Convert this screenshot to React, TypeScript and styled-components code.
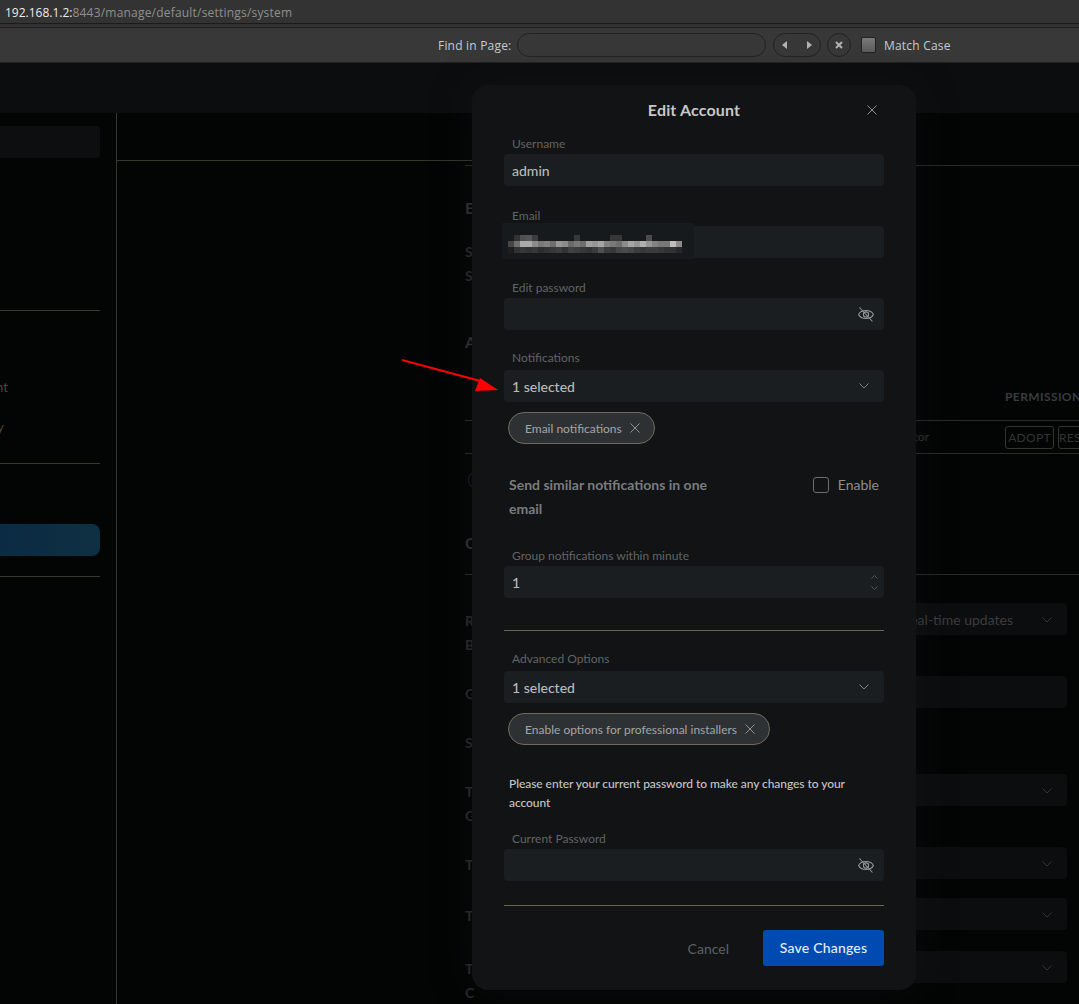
import styled, { createGlobalStyle } from 'styled-components';

const GlobalStyle = createGlobalStyle`
  html, body {
    margin: 0;
    height: 100%;
    background: #030404;
    overflow: hidden;
  }
  * {
    box-sizing: border-box;
  }
`;

const Page = styled.div`
  position: relative;
  width: 1079px;
  height: 1004px;
  overflow: hidden;
  background: #030404;
  font-family: 'Lato', sans-serif;
`;

/* browser chrome */
const UrlBar = styled.div`
  height: 24px;
  padding-left: 5px;
  background: #333333;
  border-bottom: 1px solid #1b1b1b;
  font: 12px/25px 'Open Sans', sans-serif;
  letter-spacing: 0.2px;
  color: #8f8f8f;
  white-space: nowrap;
`;

const UrlHost = styled.span`
  color: #ececec;
  letter-spacing: 0;
`;

const FindBar = styled.div`
  height: 39px;
  padding-top: 3px;
  background: #333333;
`;

const FindRow = styled.div`
  height: 36px;
  display: flex;
  align-items: center;
  padding-left: 438px;
  background: #383838;
  border-top: 1px solid #1f1f1f;
  border-bottom: 1px solid #222222;
  font: 12px 'Open Sans', sans-serif;
  letter-spacing: 0.2px;
  color: #c3ccd2;
`;

const FindLabel = styled.span`
  width: 79px;
`;

const FindInput = styled.div`
  width: 249px;
  height: 24px;
  border: 1px solid #222222;
  border-radius: 12px;
`;

const FindPill = styled.div`
  width: 48px;
  height: 24px;
  margin-left: 7px;
  padding: 0 8px;
  display: flex;
  align-items: center;
  justify-content: space-between;
  border: 1px solid #222222;
  border-radius: 12px;
`;

const FindClose = styled.div`
  width: 24px;
  height: 24px;
  margin-left: 6px;
  display: flex;
  align-items: center;
  justify-content: center;
  border: 1px solid #222222;
  border-radius: 50%;
`;

const FindCheck = styled.div`
  width: 15px;
  height: 16px;
  margin: 0 8px 0 10px;
  border: 1px solid #222222;
  border-radius: 2px;
  background: linear-gradient(#7a7a7a, #5c5c5c);
`;

/* page behind the dialog */
const TopStrip = styled.div`
  height: 50px;
  background: #0c0d0e;
`;

const Body = styled.div`
  display: flex;
  height: 891px;
`;

const Sidebar = styled.aside`
  width: 117px;
  padding: 13px 16px 0 0;
  border-right: 1px solid #38362f;
  flex-shrink: 0;
`;

const SideBox = styled.div`
  height: 32px;
  border-radius: 0 3px 3px 0;
  background: #0d0e0f;
`;

const SideRule = styled.div<{ $top: number }>`
  height: 1px;
  margin-top: ${(p) => p.$top}px;
  background: #3a3833;
`;

const SideText = styled.div<{ $top: number; $cut: number }>`
  margin-top: ${(p) => p.$top}px;
  overflow: hidden;
  text-indent: -${(p) => p.$cut}px;
  font-size: 13px;
  line-height: 24px;
  color: #4d4842;
`;

const SideActive = styled.div`
  height: 32px;
  margin-top: 60px;
  border-radius: 0 8px 8px 0;
  background: linear-gradient(90deg, #0b2a44, #0f3042);
`;

const Main = styled.main`
  flex: 1;
  min-width: 0;
  overflow: hidden;
`;

const MainHead = styled.div`
  width: 400px;
  height: 48px;
  border-bottom: 1px solid #38352e;
`;

const Panel = styled.section`
  margin: 4px 0 0 348px;
  padding-right: 12px;
  border-top: 1px solid #2b2925;
  font-size: 14px;
  line-height: 24px;
  font-weight: 700;
  color: #2a2b2c;
  overflow: hidden;
`;

const Cap = styled.div<{ $top: number }>`
  margin-top: ${(p) => p.$top}px;
`;

const Heading = styled(Cap)`
  font-size: 16px;
  color: #303234;
`;

const TableHead = styled.div`
  margin: 31px -12px 0 0;
  padding: 0 0 11px 540px;
  border-bottom: 1px solid #2d2b27;
  font-size: 12px;
  letter-spacing: 0.4px;
  color: #3b3c3d;
  white-space: nowrap;
`;

const TableRow = styled.div`
  height: 33px;
  margin-right: -12px;
  display: flex;
  align-items: center;
  gap: 4px;
  border-bottom: 1px solid #2d2b27;
  font-size: 12px;
  font-weight: 400;
  color: #333435;
`;

const RoleCell = styled.div`
  width: 464px;
  flex-shrink: 0;
  margin-right: 72px;
  text-align: right;
`;

const RowButton = styled.div`
  width: 49px;
  height: 23px;
  flex-shrink: 0;
  border: 1px solid #34332f;
  border-radius: 3px;
  line-height: 21px;
  text-align: center;
  letter-spacing: 0.3px;
  white-space: nowrap;
`;

const Radio = styled.div`
  width: 18px;
  height: 18px;
  margin: 17px 0 0 3px;
  border: 1px solid #0f2a3e;
  border-radius: 50%;
`;

const SectionHead = styled(Heading)`
  margin-right: -12px;
  padding-bottom: 19px;
  border-bottom: 1px solid #2b2925;
`;

const SettingRow = styled.div<{ $top: number; $height: number }>`
  height: ${(p) => p.$height}px;
  margin-top: ${(p) => p.$top}px;
  display: flex;
  justify-content: space-between;
`;

const SettingLabel = styled.div`
  padding-top: 6px;
`;

const GhostSelect = styled.div`
  width: 380px;
  height: 32px;
  padding: 1px 15px 0 0;
  display: flex;
  align-items: center;
  justify-content: flex-end;
  gap: 29px;
  border-radius: 4px;
  background: #0c0d0e;
  font-weight: 400;
  color: #3c3d3e;
`;

/* edit account dialog */
const Dialog = styled.div`
  position: absolute;
  top: 85px;
  left: 472px;
  width: 444px;
  height: 905px;
  padding: 0 32px;
  border-radius: 16px;
  background: #111314;
  box-shadow: 0 0 40px rgba(24, 26, 28, 0.35);
`;

const DialogHead = styled.header`
  position: relative;
  height: 49px;
  display: flex;
  align-items: center;
  justify-content: center;
  font-size: 16px;
  font-weight: 700;
  letter-spacing: 0.15px;
  color: #c6c7c6;
`;

const CloseIcon = styled.div`
  position: absolute;
  right: 7px;
  top: 20px;
  display: flex;
`;

const Label = styled.div<{ $top: number; $gap?: number }>`
  margin-top: ${(p) => p.$top}px;
  padding: 1px 0 ${(p) => p.$gap ?? 1}px 8px;
  font-size: 12px;
  line-height: 18px;
  color: #626465;
`;

const Field = styled.div`
  position: relative;
  height: 32px;
  padding: 0 15px 0 8px;
  display: flex;
  align-items: center;
  justify-content: space-between;
  border-radius: 4px;
  background: #1a1e20;
  font-size: 14px;
  font-weight: 500;
  color: #b9baba;
`;

const Mosaic = styled.svg`
  position: absolute;
  left: -2px;
  top: -3px;
`;

const EyeIcon = styled.svg`
  margin-right: -5px;
`;

const Chip = styled.div`
  height: 32px;
  width: fit-content;
  margin: 10px 0 0 4px;
  padding: 0 14px 0 16px;
  display: flex;
  align-items: center;
  gap: 8px;
  border: 1px solid #6f6a5d;
  border-radius: 16px;
  background: #2e3134;
  font-size: 12px;
  color: #a4a5a6;
`;

const ToggleRow = styled.div`
  margin-top: 29px;
  padding: 0 5px;
  display: flex;
  justify-content: space-between;
  font-size: 14px;
  line-height: 24px;
`;

const ToggleText = styled.div`
  width: 220px;
  font-weight: 700;
  color: #7b7c7c;
`;

const Enable = styled.label`
  display: flex;
  align-items: center;
  height: 24px;
  gap: 9px;
  color: #8d8e8e;
`;

const Box = styled.span`
  width: 16px;
  height: 16px;
  border: 1px solid #6d6e6e;
  border-radius: 3px;
`;

const Spin = styled.div`
  display: flex;
  flex-direction: column;
  gap: 7px;
  margin-right: -9px;
`;

const Rule = styled.div<{ $top: number }>`
  height: 1px;
  margin-top: ${(p) => p.$top}px;
  background: #6c6352;
`;

const Notice = styled.p`
  margin: 29px 0 0;
  padding-left: 5px;
  font-size: 12px;
  line-height: 19px;
  font-weight: 500;
  letter-spacing: -0.06px;
  color: #c4c5c5;
`;

const Footer = styled.footer`
  margin-top: 24px;
  display: flex;
  align-items: center;
  justify-content: flex-end;
  gap: 34px;
  font-size: 14px;
`;

const Cancel = styled.span`
  color: #5e6061;
`;

const Save = styled.div`
  width: 121px;
  height: 36px;
  border-radius: 3px;
  background: #004bb2;
  line-height: 36px;
  text-align: center;
  font-weight: 500;
  letter-spacing: 0.2px;
  color: #e6edf6;
`;

const Arrow = styled.svg`
  position: absolute;
  left: 400px;
  top: 355px;
  pointer-events: none;
`;

const row1 = [0, 50, 80, 85, 60, 0, 0, 0, 0, 0, 0, 55, 0, 0, 0, 0, 0, 55, 55, 0, 0, 0, 0, 75, 0, 0, 0, 0, 0];
const row2 = [70, 110, 170, 170, 140, 120, 130, 110, 150, 140, 105, 120, 110, 160, 150, 165, 130, 120, 110, 140, 165, 150, 175, 150, 130, 120, 120, 190, 140];
const row3 = [30, 50, 55, 50, 55, 45, 50, 55, 60, 50, 65, 60, 55, 50, 60, 80, 60, 55, 70, 75, 70, 60, 55, 60, 60, 55, 50, 50, 40];

function BlurredEmail() {
  return (
    <Mosaic width="192" height="36" viewBox="0 0 192 36">
      <rect x="0" y="0" width="192" height="36" fill="#171a1c" />
      {[row1, row2, row3].map((cells, r) =>
        cells.map((v, c) =>
          v ? (
            <rect key={`${r}-${c}`} x={6 + c * 6} y={12 + r * 6} width="6" height="6" fill={`rgb(${v},${v},${v})`} />
          ) : null,
        ),
      )}
    </Mosaic>
  );
}

function Cross({ size = 10, color = '#8e9091' }: { size?: number; color?: string }) {
  return (
    <svg width={size} height={size} viewBox="0 0 10 10" fill="none" stroke={color} strokeWidth="1">
      <path d="M0.5 0.5L9.5 9.5M9.5 0.5L0.5 9.5" />
    </svg>
  );
}

function Chevron({ color = '#7e8081' }: { color?: string }) {
  return (
    <svg width="10" height="6" viewBox="0 0 10 6" fill="none" stroke={color} strokeWidth="1">
      <path d="M0.5 0.5L5 5L9.5 0.5" />
    </svg>
  );
}

function EyeOff() {
  return (
    <EyeIcon width="16" height="15" viewBox="0 0 16 15" fill="none" stroke="#939596" strokeWidth="1.1">
      <path d="M0.6 7.5C3 2.2 13 2.2 15.4 7.5C13 12.8 3 12.8 0.6 7.5Z" />
      <circle cx="8" cy="7.5" r="2.6" />
      <path d="M1.5 0.5L14.5 14.5" />
    </EyeIcon>
  );
}

export default function App() {
  return (
    <Page>
      <GlobalStyle />
      <UrlBar>
        <UrlHost>192.168.1.2:</UrlHost>8443/manage/default/settings/system
      </UrlBar>
      <FindBar>
        <FindRow>
          <FindLabel>Find in Page:</FindLabel>
          <FindInput />
          <FindPill>
            <svg width="5" height="8" viewBox="0 0 5 8">
              <path d="M5 0V8L0 4Z" fill="#b4b4b4" />
            </svg>
            <svg width="5" height="8" viewBox="0 0 5 8">
              <path d="M0 0V8L5 4Z" fill="#b4b4b4" />
            </svg>
          </FindPill>
          <FindClose>
            <svg width="8" height="8" viewBox="0 0 8 8" fill="none" stroke="#b4b4b4" strokeWidth="2">
              <path d="M1 1L7 7M7 1L1 7" />
            </svg>
          </FindClose>
          <FindCheck />
          Match Case
        </FindRow>
      </FindBar>
      <TopStrip />

      <Body>
        <Sidebar>
          <SideBox />
          <SideRule $top={152} />
          <SideText $top={64} $cut={4}>
            nt
          </SideText>
          <SideText $top={16} $cut={3}>
            y
          </SideText>
          <SideRule $top={24} />
          <SideActive />
          <SideRule $top={20} />
        </Sidebar>
        <Main>
          <MainHead />
          <Panel>
            <Heading $top={30}>E</Heading>
            <Cap $top={20}>S</Cap>
            <Cap $top={0}>S</Cap>
            <Heading $top={42}>A</Heading>
            <TableHead>PERMISSIONS</TableHead>
            <TableRow>
              <RoleCell>Administrator</RoleCell>
              <RowButton>ADOPT</RowButton>
              <RowButton>RESTART</RowButton>
            </TableRow>
            <Radio />
            <SectionHead $top={42}>C</SectionHead>
            <SettingRow $top={28} $height={53}>
              <SettingLabel>
                R
                <br />B
              </SettingLabel>
              <GhostSelect>
                Real-time updates
                <Chevron color="#333435" />
              </GhostSelect>
            </SettingRow>
            <SettingRow $top={20} $height={33}>
              <SettingLabel>G</SettingLabel>
              <GhostSelect />
            </SettingRow>
            <SettingRow $top={16} $height={29}>
              <SettingLabel>S</SettingLabel>
            </SettingRow>
            <SettingRow $top={20} $height={53}>
              <SettingLabel>
                T
                <br />G
              </SettingLabel>
              <GhostSelect>
                <Chevron color="#333435" />
              </GhostSelect>
            </SettingRow>
            <SettingRow $top={20} $height={32}>
              <SettingLabel>T</SettingLabel>
              <GhostSelect>
                <Chevron color="#333435" />
              </GhostSelect>
            </SettingRow>
            <SettingRow $top={19} $height={33}>
              <SettingLabel>T</SettingLabel>
              <GhostSelect>
                <Chevron color="#333435" />
              </GhostSelect>
            </SettingRow>
            <SettingRow $top={20} $height={53}>
              <SettingLabel>
                T
                <br />C
              </SettingLabel>
              <GhostSelect>
                <Chevron color="#333435" />
              </GhostSelect>
            </SettingRow>
          </Panel>
        </Main>
      </Body>

      <Dialog>
        <DialogHead>
          Edit Account
          <CloseIcon>
            <Cross />
          </CloseIcon>
        </DialogHead>
        <Label $top={0}>Username</Label>
        <Field>admin</Field>
        <Label $top={20}>Email</Label>
        <Field>
          <BlurredEmail />
        </Field>
        <Label $top={20}>Edit password</Label>
        <Field>
          <span />
          <EyeOff />
        </Field>
        <Label $top={18} $gap={3}>
          Notifications
        </Label>
        <Field>
          1 selected
          <Chevron />
        </Field>
        <Chip>
          Email notifications
          <Cross size={10} />
        </Chip>
        <ToggleRow>
          <ToggleText>Send similar notifications in one email</ToggleText>
          <Enable>
            <Box />
            Enable
          </Enable>
        </ToggleRow>
        <Label $top={25}>Group notifications within minute</Label>
        <Field>
          1
          <Spin>
            <svg width="7" height="4" viewBox="0 0 7 4" fill="none" stroke="#55585a">
              <path d="M0.5 3.5L3.5 0.5L6.5 3.5" />
            </svg>
            <svg width="7" height="4" viewBox="0 0 7 4" fill="none" stroke="#55585a">
              <path d="M0.5 0.5L3.5 3.5L6.5 0.5" />
            </svg>
          </Spin>
        </Field>
        <Rule $top={32} />
        <Label $top={18} $gap={3}>
          Advanced Options
        </Label>
        <Field>
          1 selected
          <Chevron />
        </Field>
        <Chip>
          Enable options for professional installers
          <Cross size={10} />
        </Chip>
        <Notice>Please enter your current password to make any changes to your account</Notice>
        <Label $top={17}>Current Password</Label>
        <Field>
          <span />
          <EyeOff />
        </Field>
        <Rule $top={24} />
        <Footer>
          <Cancel>Cancel</Cancel>
          <Save>Save Changes</Save>
        </Footer>
      </Dialog>

      <Arrow width="100" height="40" viewBox="0 0 100 40">
        <path d="M2 5L84 27" stroke="#ff0000" strokeWidth="2" />
        <path d="M98 35L80 23L75 36Z" fill="#ff0000" />
      </Arrow>
    </Page>
  );
}
